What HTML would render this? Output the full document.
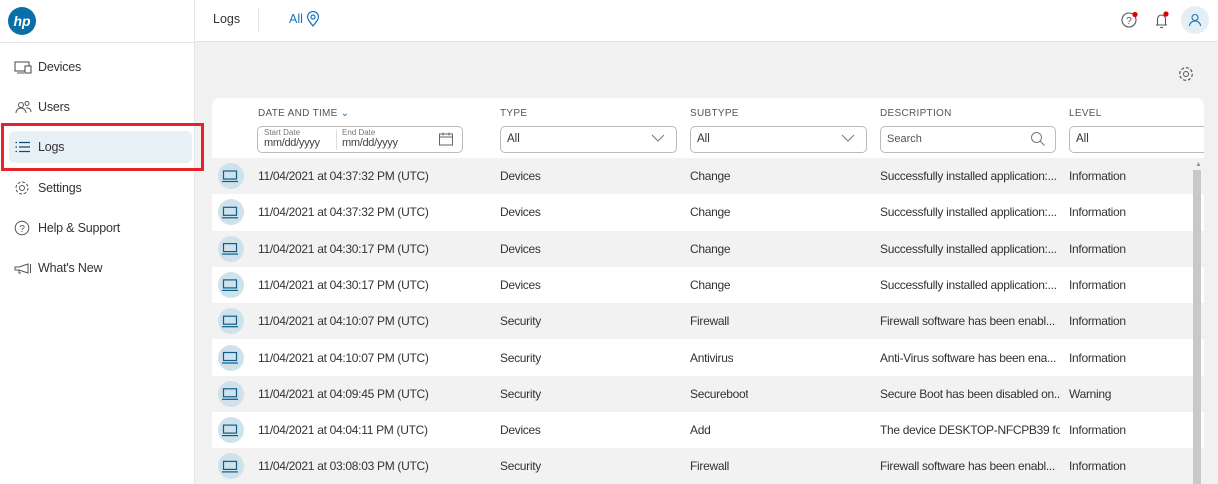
<!DOCTYPE html>
<html><head><meta charset="utf-8"><style>
*{box-sizing:border-box;margin:0;padding:0}
html,body{width:1218px;height:484px;overflow:hidden}
body{font-family:"Liberation Sans",sans-serif;background:#f1f1f1;color:#333;position:relative;font-size:12px}
.abs{position:absolute}
.side{left:0;top:0;width:195px;height:484px;background:#fff;border-right:1px solid #e4e4e4}
.top{left:195px;top:0;width:1023px;height:42px;background:#fff;border-bottom:1px solid #e4e4e4}
.logohr{left:0;top:42px;width:195px;height:1px;background:#e4e4e4}
.nav{left:14px;font-size:12.5px;color:#333;letter-spacing:-0.2px}
.nav svg{position:absolute;left:0;top:-1px}
.nav span{position:absolute;left:24px;top:0;white-space:nowrap}
.card{left:212px;top:98px;width:992px;height:386px;background:#fff;border-radius:8px 8px 0 0;overflow:hidden}
.hd{font-size:10px;color:#555;letter-spacing:0.3px;top:108px}
.inp{height:27px;top:126px;border:1px solid #bbb;border-radius:5px;background:#fff}
.row{left:0;width:992px;height:36.3px}
.row.g{background:#f2f2f2}
.c{position:absolute;top:11px;font-size:12px;letter-spacing:-0.3px;color:#333;white-space:nowrap;overflow:hidden}
.ic{position:absolute;left:6px;top:5px;width:26px;height:26px;border-radius:50%;background:#cfe2ec}
</style></head><body>
<div class="abs side"></div>
<div class="abs top"></div>
<div class="abs logohr"></div>
<svg class="abs" style="left:8px;top:7px" width="28" height="28" viewBox="0 0 28 28"><circle cx="14" cy="14" r="14" fill="#0a6fa8"/><text x="14" y="19" font-family="Liberation Sans" font-style="italic" font-weight="bold" font-size="14" fill="#fff" text-anchor="middle">hp</text></svg>
<div class="abs" style="left:213px;top:12px;font-size:12.5px;color:#333">Logs</div>
<div class="abs" style="left:258px;top:8px;width:1px;height:25px;background:#e4e4e4"></div>
<div class="abs" style="left:289px;top:12px;font-size:12.5px;color:#1a73b8">All</div>
<svg class="abs" style="left:306px;top:11px" width="14" height="16" viewBox="0 0 14 16"><path d="M7 15C3 10 1.5 8 1.5 6a5.5 5.5 0 0 1 11 0c0 2-1.5 4-5.5 9z" fill="none" stroke="#1a73b8" stroke-width="1.2"/><circle cx="7" cy="6" r="2" fill="none" stroke="#1a73b8" stroke-width="1.2"/></svg>
<svg class="abs" style="left:1120px;top:10px" width="20" height="20" viewBox="0 0 20 20"><circle cx="9" cy="10" r="7" fill="none" stroke="#555" stroke-width="1.1"/><text x="9" y="14" font-size="10" text-anchor="middle" fill="#555" font-family="Liberation Sans">?</text><circle cx="15" cy="4.5" r="2.6" fill="#d00"/></svg>
<svg class="abs" style="left:1152px;top:10px" width="20" height="20" viewBox="0 0 20 20"><path d="M4 15h11M5.5 15V9a4 4 0 0 1 8 0v6M8 17.5h3" fill="none" stroke="#555" stroke-width="1.1"/><circle cx="14" cy="4" r="2.6" fill="#d00"/></svg>
<div class="abs" style="left:1181px;top:6px;width:28px;height:28px;border-radius:50%;background:#e3eef5"></div>
<svg class="abs" style="left:1187px;top:12px" width="16" height="16" viewBox="0 0 16 16"><circle cx="8" cy="5.5" r="3" fill="none" stroke="#1a73b8" stroke-width="1.1"/><path d="M2.5 14a5.5 5 0 0 1 11 0" fill="none" stroke="#1a73b8" stroke-width="1.1"/></svg>

<div class="abs nav" style="top:60px"><svg width="20" height="16" viewBox="0 0 20 16"><rect x="1" y="3" width="14" height="9" fill="none" stroke="#555" stroke-width="1.1"/><rect x="11" y="7" width="6" height="7" fill="#fff" stroke="#555" stroke-width="1.1"/><path d="M3 14h7" stroke="#555"/></svg><span>Devices</span></div>
<div class="abs nav" style="top:100px"><svg width="20" height="16" viewBox="0 0 20 16"><circle cx="7" cy="6" r="2.5" fill="none" stroke="#555"/><path d="M2 14a5 5 0 0 1 10 0" fill="none" stroke="#555"/><circle cx="13" cy="4.5" r="2" fill="none" stroke="#555"/><path d="M12 9a4 4 0 0 1 5 4" fill="none" stroke="#555"/></svg><span>Users</span></div>
<div class="abs" style="left:1px;top:123px;width:203px;height:48px;border:3px solid #e8222a"></div>
<div class="abs" style="left:9px;top:131px;width:183px;height:32px;background:#e7f0f5;border-radius:6px"></div>
<div class="abs nav" style="top:140px"><svg width="20" height="16" viewBox="0 0 20 16"><path d="M5 3.5h11M5 8h11M5 12.5h11M1.5 3.5h1.5M1.5 8h1.5M1.5 12.5h1.5" stroke="#0b4d78" stroke-width="1.3"/></svg><span>Logs</span></div>
<div class="abs nav" style="top:181px"><svg width="20" height="16" viewBox="0 0 20 16"><circle cx="8" cy="8" r="2.5" fill="none" stroke="#555"/><circle cx="8" cy="8" r="6" fill="none" stroke="#555" stroke-dasharray="3 1.7"/></svg><span>Settings</span></div>
<div class="abs nav" style="top:221px"><svg width="20" height="16" viewBox="0 0 20 16"><circle cx="8" cy="8" r="6.8" fill="none" stroke="#555"/><text x="8" y="12" font-size="10" text-anchor="middle" fill="#555">?</text></svg><span>Help &amp; Support</span></div>
<div class="abs nav" style="top:261px"><svg width="20" height="16" viewBox="0 0 20 16"><path d="M1 7h4l9-3v9l-9-3H1z M5 10v3h2" fill="none" stroke="#555"/><path d="M16.5 4v9" stroke="#555"/></svg><span>What's New</span></div>

<svg class="abs" style="left:1177px;top:65px" width="18" height="18" viewBox="0 0 18 18"><circle cx="9" cy="9" r="2.5" fill="none" stroke="#555"/><circle cx="9" cy="9" r="6.3" fill="none" stroke="#555" stroke-width="1.2" stroke-dasharray="3 1.9"/></svg>

<div class="abs card">
<div class="abs" style="left:0;top:60px;width:992px">
<div class="abs row g" style="top:0"></div>
<div class="abs row g" style="top:72.6px"></div>
<div class="abs row g" style="top:145.2px"></div>
<div class="abs row g" style="top:217.8px"></div>
<div class="abs row g" style="top:290.4px"></div>
</div>
<div class="abs" style="left:981px;top:72px;width:8px;height:330px;background:#c8c8c8"></div>
</div>

<div class="abs hd" style="left:258px">DATE AND TIME <span style="color:#1a73b8">&#8964;</span></div>
<div class="abs hd" style="left:500px">TYPE</div>
<div class="abs hd" style="left:690px">SUBTYPE</div>
<div class="abs hd" style="left:880px">DESCRIPTION</div>
<div class="abs hd" style="left:1069px">LEVEL</div>

<div class="abs inp" style="left:257px;width:206px"></div>
<div class="abs" style="left:264px;top:128px;font-size:8px;color:#777">Start Date</div>
<div class="abs" style="left:264px;top:137px;font-size:11px;color:#444;letter-spacing:-0.3px">mm/dd/yyyy</div>
<div class="abs" style="left:336px;top:130px;width:1px;height:20px;background:#ddd"></div>
<div class="abs" style="left:342px;top:128px;font-size:8px;color:#777">End Date</div>
<div class="abs" style="left:342px;top:137px;font-size:11px;color:#444;letter-spacing:-0.3px">mm/dd/yyyy</div>
<svg class="abs" style="left:438px;top:131px" width="16" height="16" viewBox="0 0 16 16"><rect x="1.5" y="3" width="13" height="11" fill="none" stroke="#666"/><path d="M1.5 6h13M5 1.5v3M11 1.5v3" stroke="#666"/></svg>
<div class="abs inp" style="left:500px;width:177px"></div>
<div class="abs" style="left:507px;top:133px;font-size:11.5px">All</div>
<svg class="abs" style="left:651px;top:133px" width="14" height="10"><path d="M1 2l6 6 6-6" fill="none" stroke="#777"/></svg>
<div class="abs inp" style="left:690px;width:177px"></div>
<div class="abs" style="left:697px;top:133px;font-size:11.5px">All</div>
<svg class="abs" style="left:841px;top:133px" width="14" height="10"><path d="M1 2l6 6 6-6" fill="none" stroke="#777"/></svg>
<div class="abs inp" style="left:880px;width:176px"></div>
<div class="abs" style="left:887px;top:133px;font-size:11px;color:#555">Search</div>
<svg class="abs" style="left:1030px;top:131px" width="16" height="16"><circle cx="6.5" cy="6.5" r="5" fill="none" stroke="#777"/><path d="M10 10l4.5 4.5" stroke="#777"/></svg>
<div class="abs inp" style="left:1069px;width:150px;border-right:none;border-radius:5px 0 0 5px"></div>
<div class="abs" style="left:1076px;top:133px;font-size:11.5px">All</div>
<div class="abs" style="left:1204px;top:98px;width:14px;height:386px;background:#f1f1f1"></div>
<div class="abs" style="left:1195px;top:161px;font-size:7px;color:#999">▲</div>

<div class="abs" style="left:212px;top:158px;width:980px;height:326px;overflow:hidden">
<div class="abs row" style="top:0"><div class="ic"></div><div class="c" style="left:46px">11/04/2021 at 04:37:32 PM (UTC)</div><div class="c" style="left:288px">Devices</div><div class="c" style="left:478px">Change</div><div class="c" style="left:668px;width:180px">Successfully installed application:...</div><div class="c" style="left:857px">Information</div></div>
<div class="abs row" style="top:36.3px"><div class="ic"></div><div class="c" style="left:46px">11/04/2021 at 04:37:32 PM (UTC)</div><div class="c" style="left:288px">Devices</div><div class="c" style="left:478px">Change</div><div class="c" style="left:668px;width:180px">Successfully installed application:...</div><div class="c" style="left:857px">Information</div></div>
<div class="abs row" style="top:72.6px"><div class="ic"></div><div class="c" style="left:46px">11/04/2021 at 04:30:17 PM (UTC)</div><div class="c" style="left:288px">Devices</div><div class="c" style="left:478px">Change</div><div class="c" style="left:668px;width:180px">Successfully installed application:...</div><div class="c" style="left:857px">Information</div></div>
<div class="abs row" style="top:108.9px"><div class="ic"></div><div class="c" style="left:46px">11/04/2021 at 04:30:17 PM (UTC)</div><div class="c" style="left:288px">Devices</div><div class="c" style="left:478px">Change</div><div class="c" style="left:668px;width:180px">Successfully installed application:...</div><div class="c" style="left:857px">Information</div></div>
<div class="abs row" style="top:145.2px"><div class="ic"></div><div class="c" style="left:46px">11/04/2021 at 04:10:07 PM (UTC)</div><div class="c" style="left:288px">Security</div><div class="c" style="left:478px">Firewall</div><div class="c" style="left:668px;width:180px">Firewall software has been enabl...</div><div class="c" style="left:857px">Information</div></div>
<div class="abs row" style="top:181.5px"><div class="ic"></div><div class="c" style="left:46px">11/04/2021 at 04:10:07 PM (UTC)</div><div class="c" style="left:288px">Security</div><div class="c" style="left:478px">Antivirus</div><div class="c" style="left:668px;width:180px">Anti-Virus software has been ena...</div><div class="c" style="left:857px">Information</div></div>
<div class="abs row" style="top:217.8px"><div class="ic"></div><div class="c" style="left:46px">11/04/2021 at 04:09:45 PM (UTC)</div><div class="c" style="left:288px">Security</div><div class="c" style="left:478px">Secureboot</div><div class="c" style="left:668px;width:180px">Secure Boot has been disabled on...</div><div class="c" style="left:857px">Warning</div></div>
<div class="abs row" style="top:254.1px"><div class="ic"></div><div class="c" style="left:46px">11/04/2021 at 04:04:11 PM (UTC)</div><div class="c" style="left:288px">Devices</div><div class="c" style="left:478px">Add</div><div class="c" style="left:668px;width:180px">The device DESKTOP-NFCPB39 fo...</div><div class="c" style="left:857px">Information</div></div>
<div class="abs row" style="top:290.4px"><div class="ic"></div><div class="c" style="left:46px">11/04/2021 at 03:08:03 PM (UTC)</div><div class="c" style="left:288px">Security</div><div class="c" style="left:478px">Firewall</div><div class="c" style="left:668px;width:180px">Firewall software has been enabl...</div><div class="c" style="left:857px">Information</div></div>
</div>
<svg class="abs" style="left:221px;top:0" width="20" height="484">
<defs><g id="lp"><rect x="2.5" y="0" width="13" height="8" fill="none" stroke="#0b5f8a" stroke-width="1.2"/><path d="M1 10.5h16" stroke="#0b5f8a" stroke-width="1.2"/></g></defs>
<use href="#lp" y="171"/><use href="#lp" y="207.3"/><use href="#lp" y="243.6"/><use href="#lp" y="279.9"/><use href="#lp" y="316.2"/><use href="#lp" y="352.5"/><use href="#lp" y="388.8"/><use href="#lp" y="425.1"/><use href="#lp" y="461.4"/>
</svg>
</body></html>
